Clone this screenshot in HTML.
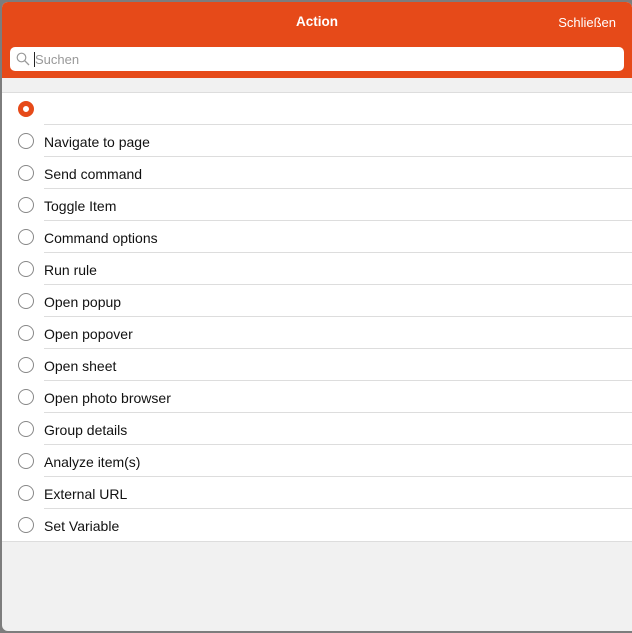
<!DOCTYPE html>
<html><head><meta charset="utf-8"><style>
*{margin:0;padding:0;box-sizing:border-box}
html,body{width:632px;height:633px;overflow:hidden;background:#7d7d7d;font-family:"Liberation Sans",sans-serif}
.modal{position:absolute;left:2px;top:2px;width:630px;height:629px;background:#f1f1f1;border-radius:6px 6px 0 6px;overflow:hidden}
.hdr{height:76px;background:#e64a19;position:relative}
.title{position:absolute;top:12px;left:0;width:630px;text-align:center;color:#fff;font-size:13.5px;font-weight:bold}
.close{position:absolute;top:13px;right:16px;color:#fff;font-size:13px}
.search{position:absolute;left:8px;top:45px;width:614px;height:24px;background:#fff;border-radius:5px}
.search svg{position:absolute;left:6px;top:5px}
.search .cur{position:absolute;left:24px;top:5px;width:1px;height:15px;background:#222}
.search span{position:absolute;left:25px;top:5px;font-size:13px;color:#999}
.list{position:absolute;top:90px;left:0;width:630px;background:#fff;border-top:1px solid #ddd;border-bottom:1px solid #ddd}
.row{height:32px;position:relative;font-size:14px;color:#111}
.row:not(:last-child)::after{content:"";position:absolute;left:42px;right:0;bottom:0;height:1px;background:#ddd}
.r{position:absolute;left:16px;top:8px;width:16px;height:16px;border:1.3px solid #888;border-radius:50%}
.r.on{border:5px solid #e64a19;background:#fff}
.t{position:absolute;left:42px;top:9px}
</style></head><body>
<div class="modal">
<div class="hdr"><div class="title">Action</div><div class="close">Schließen</div>
<div class="search"><svg width="14" height="14" viewBox="0 0 14 14"><circle cx="5.5" cy="5.5" r="4.3" fill="none" stroke="#999" stroke-width="1.2"/><line x1="8.6" y1="8.6" x2="13" y2="13" stroke="#999" stroke-width="1.3"/></svg><div class="cur"></div><span>Suchen</span></div></div>
<div class="list">
<div class="row"><div class="r on"></div></div>
<div class="row"><div class="r"></div><div class="t">Navigate to page</div></div>
<div class="row"><div class="r"></div><div class="t">Send command</div></div>
<div class="row"><div class="r"></div><div class="t">Toggle Item</div></div>
<div class="row"><div class="r"></div><div class="t">Command options</div></div>
<div class="row"><div class="r"></div><div class="t">Run rule</div></div>
<div class="row"><div class="r"></div><div class="t">Open popup</div></div>
<div class="row"><div class="r"></div><div class="t">Open popover</div></div>
<div class="row"><div class="r"></div><div class="t">Open sheet</div></div>
<div class="row"><div class="r"></div><div class="t">Open photo browser</div></div>
<div class="row"><div class="r"></div><div class="t">Group details</div></div>
<div class="row"><div class="r"></div><div class="t">Analyze item(s)</div></div>
<div class="row"><div class="r"></div><div class="t">External URL</div></div>
<div class="row"><div class="r"></div><div class="t">Set Variable</div></div>
</div>
</div>
</body></html>
